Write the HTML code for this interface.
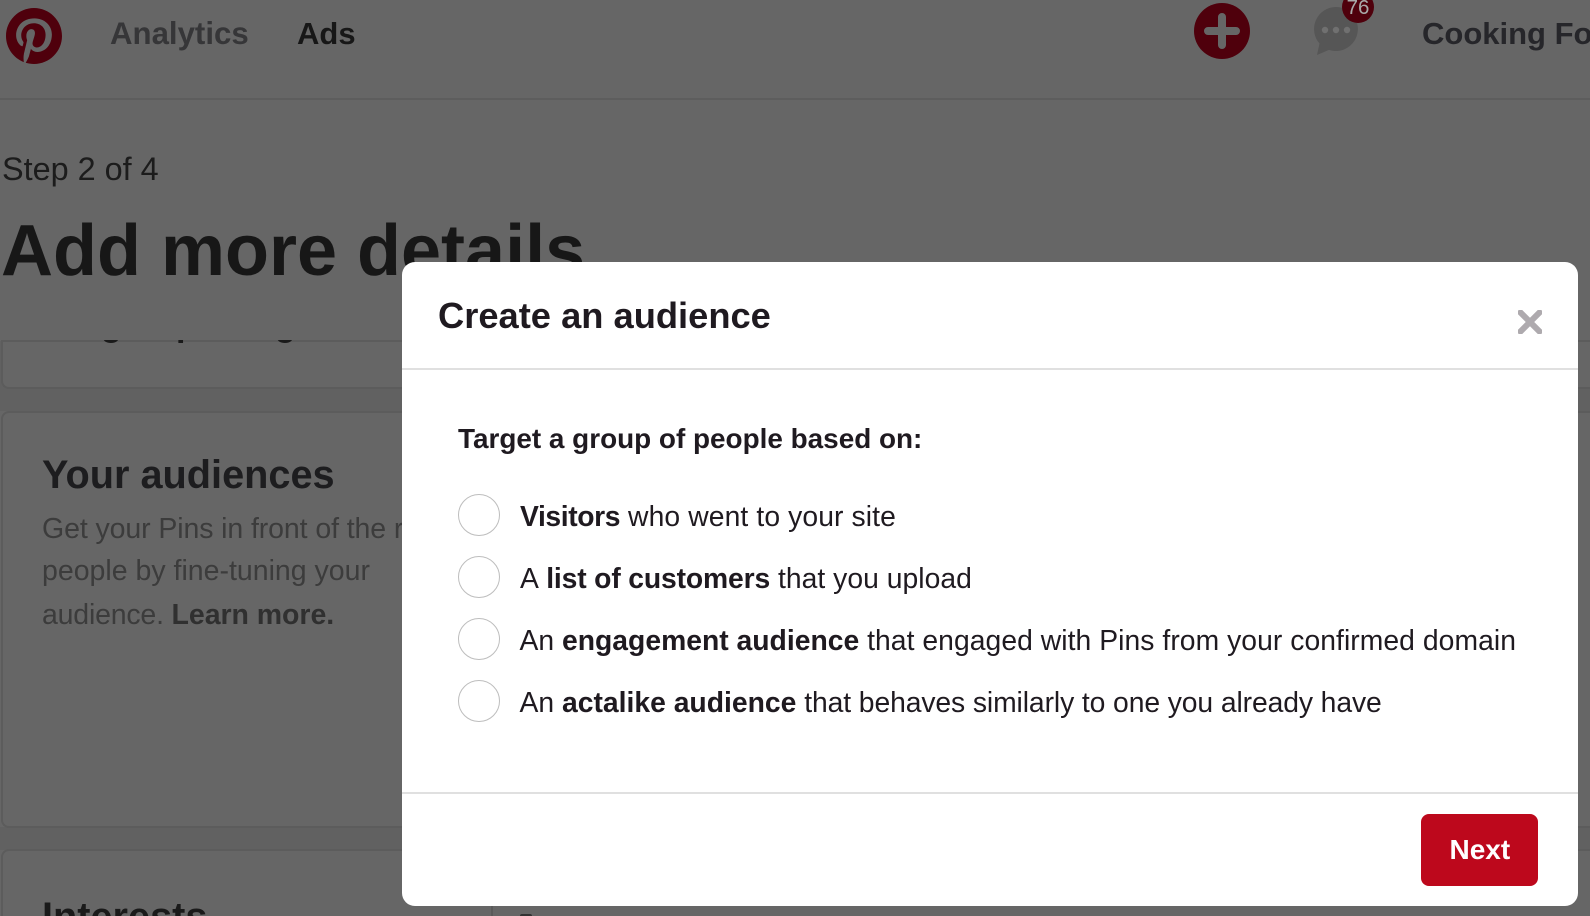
<!DOCTYPE html>
<html lang="en">
<head>
<meta charset="utf-8">
<title>Create an audience</title>
<style>
html,body{margin:0;padding:0;width:1590px;height:916px;overflow:hidden;background:#666}
body{font-family:"Liberation Sans",Arial,sans-serif}
#w{position:absolute;left:0;top:0;width:1590px;height:916px;overflow:hidden;background:#666}
.t{position:absolute;line-height:0;white-space:nowrap}
b{font-weight:700}
.box{position:absolute;box-sizing:border-box}
.card{position:absolute;box-sizing:border-box;left:1px;width:1589px;background:#666;border:2px solid #5c5c5c;border-right:0;border-radius:8px 0 0 8px}
.radio{position:absolute;left:458px;width:42px;height:42px;box-sizing:border-box;border:1.5px solid #bdbdbd;border-radius:50%;background:#fff}
.opt{left:520px;font-size:28.3px;color:#1f1a20}
</style>
</head>
<body>
<div id="w">
<!-- page behind overlay -->
<div class="box" style="left:0;top:98px;width:1590px;height:2px;background:#5d5d5d"></div>

<svg class="box" style="left:6px;top:8px" width="56" height="56" viewBox="0 0 24 24"><path fill="#4f000c" d="M12 0C5.373 0 0 5.373 0 12c0 5.084 3.163 9.426 7.627 11.174-.105-.949-.2-2.405.042-3.441.218-.937 1.407-5.965 1.407-5.965s-.359-.719-.359-1.782c0-1.668.967-2.914 2.171-2.914 1.023 0 1.518.769 1.518 1.69 0 1.029-.655 2.568-.994 3.995-.283 1.194.599 2.169 1.777 2.169 2.133 0 3.772-2.249 3.772-5.495 0-2.873-2.064-4.882-5.012-4.882-3.414 0-5.418 2.561-5.418 5.207 0 1.031.397 2.138.893 2.738.098.119.112.224.083.345l-.333 1.36c-.053.22-.174.267-.402.161-1.499-.698-2.436-2.889-2.436-4.649 0-3.785 2.75-7.262 7.929-7.262 4.163 0 7.398 2.967 7.398 6.931 0 4.136-2.607 7.464-6.227 7.464-1.216 0-2.359-.631-2.75-1.378l-.748 2.853c-.271 1.043-1.002 2.35-1.492 3.146C9.57 23.812 10.763 24 12 24c6.627 0 12-5.373 12-12S18.627 0 12 0z"/></svg>
<div class="t" style="left:110px;top:33.5px;font-size:31.2px;font-weight:700;color:#363638">Analytics</div>
<div class="t" style="left:297px;top:33.5px;font-size:31px;font-weight:700;color:#171717">Ads</div>

<svg class="box" style="left:1194px;top:3px" width="56" height="56" viewBox="0 0 56 56"><circle cx="28" cy="28" r="28" fill="#4f000c"/><path d="M28 14V42M14 28H42" stroke="#666" stroke-width="8" stroke-linecap="round"/></svg>

<svg class="box" style="left:1310px;top:0" width="70" height="60" viewBox="0 0 70 60"><path fill="#565656" d="M26 7a22 22 0 1 1-7 42.9L7 55l2.5-11.5A22 22 0 0 1 26 7z"/><circle cx="15" cy="30" r="3.2" fill="#707070"/><circle cx="26" cy="30" r="3.2" fill="#707070"/><circle cx="37" cy="30" r="3.2" fill="#707070"/><circle cx="48" cy="7" r="16" fill="#4f000c"/><text x="48" y="14" text-anchor="middle" font-family="Liberation Sans, Arial, sans-serif" font-size="20.5" fill="#a8a8a8">76</text></svg>

<div class="t" style="left:1422px;top:13.5px;width:168px;height:40px;overflow:hidden;line-height:40px;font-size:31px;font-weight:700;color:#26262a">Cooking Fo</div>

<div class="t" style="left:2px;top:168.9px;font-size:32.4px;color:#1c1c1c">Step 2 of 4</div>
<div class="t" style="left:1px;top:251px;font-size:72px;font-weight:700;color:#171717">Add more details</div>

<!-- card 1 -->
<div style="position:absolute;left:0;top:341px;width:1590px;height:70px;background:#616161"></div>
<div class="card" style="top:340px;height:49px;border-top:0;border-top-left-radius:0;overflow:hidden">
  <div class="box" style="left:-1px;top:0;width:1590px;height:2px;background:#5c5c5c"></div>
  <div class="t" style="left:98px;top:-14.8px;font-size:34px;font-weight:700;color:#1a1a1a">g</div>
  <div class="t" style="left:173px;top:-14.8px;font-size:34px;font-weight:700;color:#1a1a1a">p</div>
  <div class="t" style="left:272px;top:-14.8px;font-size:34px;font-weight:700;color:#1a1a1a">g</div>
</div>

<!-- card 2 -->
<div style="position:absolute;left:0;top:827px;width:1590px;height:23px;background:#616161"></div>
<div class="card" style="top:411px;height:417px"></div>
<div class="t" style="left:42px;top:475px;font-size:39.7px;font-weight:700;color:#1d1d1f">Your audiences</div>
<div class="t" style="left:42px;top:529.1px;font-size:28.5px;letter-spacing:-.1px;color:#3c3c3c">Get your Pins in front of the right</div>
<div class="t" style="left:42px;top:571.1px;font-size:28.5px;color:#3c3c3c">people by fine-tuning your</div>
<div class="t" style="left:42px;top:615px;font-size:28.5px;color:#3c3c3c"><span style="letter-spacing:-.2px">audience. </span><b style="color:#303030;letter-spacing:-.05px">Learn more.</b></div>

<!-- card 3 -->
<div class="card" style="top:849px;height:67px;border-bottom:0;border-bottom-left-radius:0;border-top-left-radius:8px"></div>
<div class="t" style="left:42px;top:900px;width:300px;height:16px;overflow:hidden;line-height:34.4px;font-size:39.7px;font-weight:700;color:#1a1a1a">Interests</div>
<div class="box" style="left:491px;top:905px;width:2px;height:11px;background:#5a5a5a"></div>
<div class="box" style="left:520px;top:914px;width:12px;height:2px;border-radius:6px 6px 0 0;background:#333"></div>

<!-- modal -->
<div class="box" style="left:402px;top:262px;width:1176px;height:644px;background:#fff;border-radius:13px"></div>
<div class="t" style="left:438px;top:315.5px;font-size:36.3px;font-weight:700;color:#1f1a20">Create an audience</div>
<svg class="box" style="left:1518px;top:310px" width="24" height="24" viewBox="0 0 24 24"><path d="M2.5 2.5L21.5 21.5M21.5 2.5L2.5 21.5" stroke="#aeaaae" stroke-width="6" stroke-linecap="square"/></svg>
<div class="box" style="left:402px;top:368px;width:1176px;height:2px;background:#e0e0e0"></div>

<div class="t" style="left:458px;top:439px;font-size:27.9px;font-weight:700;color:#1f1a20">Target a group of people based on:</div>

<div class="radio" style="top:493.5px"></div>
<div class="t opt" style="top:516px"><b style="letter-spacing:-.4px">Visitors</b><span style="letter-spacing:.1px"> who went to your site</span></div>
<div class="radio" style="top:555.5px"></div>
<div class="t opt" style="top:578px">A <b style="letter-spacing:-.15px;margin-left:1px">list of customers</b> <span style="letter-spacing:.03px">that you upload</span></div>
<div class="radio" style="top:617.5px"></div>
<div class="t opt" style="top:640px"><span style="margin-left:-.5px">An</span> <b>engagement audience</b> <span style="letter-spacing:.05px">that engaged with Pins from your confirmed domain</span></div>
<div class="radio" style="top:679.5px"></div>
<div class="t opt" style="top:702px"><span style="margin-left:-.5px">An</span> <b>actalike audience</b> <span style="letter-spacing:-.1px">that behaves similarly to one you already have</span></div>

<div class="box" style="left:402px;top:792px;width:1176px;height:2px;background:#e0e0e0"></div>
<div class="box" style="left:1421px;top:814px;width:117px;height:72px;background:#bd081c;border-radius:8px"></div>
<div class="t" style="left:1449.5px;top:850.3px;font-size:28px;font-weight:700;color:#fff">Next</div>
</div>
</body>
</html>
